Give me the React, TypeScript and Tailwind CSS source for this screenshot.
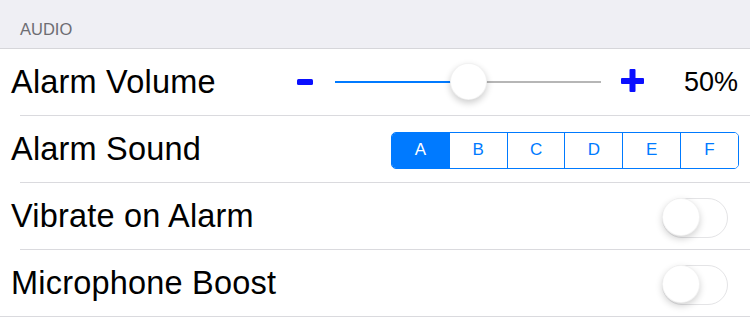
import { useState } from "react";

const font = { fontFamily: '"Liberation Sans", Arial, sans-serif' };

function Toggle({ on }: { on: boolean }) {
  return (
    <div
      className={`relative w-[66px] h-[40px] rounded-full border-[1.5px] ${
        on ? "bg-[#4cd964] border-[#4cd964]" : "bg-white border-[#e4e4e6]"
      }`}
    >
      <div
        className={`absolute top-[-0.5px] ${on ? "right-[-1px]" : "left-[-1px]"} w-[38px] h-[38px] rounded-full bg-white border border-black/5 shadow-[0_3px_7px_rgba(0,0,0,0.18)]`}
      />
    </div>
  );
}

function Separator({ full }: { full?: boolean }) {
  return <div className={`${full ? "" : "ml-[20px]"} h-px bg-[#dadade]`} />;
}

export default function App() {
  const [volume] = useState(50);
  const [sound, setSound] = useState("A");
  const [vibrate, setVibrate] = useState(false);
  const [boost, setBoost] = useState(false);
  const trackWidth = 266;
  const fill = Math.round((trackWidth * volume) / 100);

  return (
    <div className="w-[750px] h-[319px] bg-white text-black overflow-hidden" style={font}>
      {/* Section header */}
      <div className="h-[49px] bg-[#efeff4] border-b border-[#d6d6da] pl-[20px] pt-[20px]">
        <p className="text-[16.5px] leading-[18px] text-[#6d6d72]">AUDIO</p>
      </div>

      {/* Alarm Volume */}
      <div className="h-[66px] flex items-center pl-[11px] pr-[12px]">
        <span className="text-[32.5px] tracking-[0.2px]">Alarm Volume</span>
        <div className="ml-auto flex items-center">
          <svg width="16" height="6" viewBox="0 0 16 6" className="mt-[-1px]">
            <rect x="0" y="0" width="16" height="6" rx="1.5" fill="#0a0fff" />
          </svg>
          <div className="relative ml-[22px] w-[266px] h-[2px] flex">
            <div className="h-full bg-[#007aff]" style={{ width: fill }} />
            <div className="h-full flex-1 bg-[#b6b6b6]" />
            <div
              className="absolute top-[-18px] w-[37px] h-[37px] rounded-full bg-white border border-black/5 shadow-[0_3px_7px_rgba(0,0,0,0.2)]"
              style={{ left: fill - 18 }}
            />
          </div>
          <svg width="23" height="23" viewBox="0 0 23 23" className="ml-[20px] mt-[-3px]">
            <rect x="8.5" y="0" width="6" height="23" rx="1" fill="#0a0fff" />
            <rect x="0" y="9" width="23" height="6" rx="1" fill="#0a0fff" />
          </svg>
          <span className="w-[94px] text-right text-[27px]">{volume}%</span>
        </div>
      </div>
      <Separator />

      {/* Alarm Sound */}
      <div className="h-[66px] flex items-center pl-[11px] pr-[11px]">
        <span className="text-[32.5px] tracking-[0.2px]">Alarm Sound</span>
        <div className="ml-auto mt-[2px] flex w-[348px] h-[37px] rounded-[5px] border border-[#007aff] overflow-hidden">
          {["A", "B", "C", "D", "E", "F"].map((s, i) => (
            <button
              key={s}
              onClick={() => setSound(s)}
              className={`flex-1 flex items-center justify-center text-[17px] ${
                i > 0 ? "border-l border-[#007aff]" : ""
              } ${sound === s ? "bg-[#007aff] text-white" : "bg-white text-[#007aff]"}`}
            >
              {s}
            </button>
          ))}
        </div>
      </div>
      <Separator />

      {/* Vibrate on Alarm */}
      <div className="h-[66px] flex items-center pl-[11px] pr-[22px]">
        <span className="text-[32.5px] tracking-[0.2px]">Vibrate on Alarm</span>
        <div className="ml-auto mt-[3px]" onClick={() => setVibrate(!vibrate)}>
          <Toggle on={vibrate} />
        </div>
      </div>
      <Separator />

      {/* Microphone Boost */}
      <div className="h-[66px] flex items-center pl-[11px] pr-[22px]">
        <span className="text-[32.5px] tracking-[0.2px]">Microphone Boost</span>
        <div className="ml-auto mt-[3px]" onClick={() => setBoost(!boost)}>
          <Toggle on={boost} />
        </div>
      </div>
      <Separator full />
    </div>
  );
}
